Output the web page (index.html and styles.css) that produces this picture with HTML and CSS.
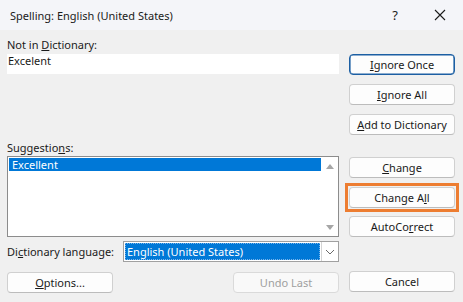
FILE: index.html
```html
<!DOCTYPE html>
<html lang="en">
<head>
  <meta charset="UTF-8">
  <title>Spelling: English (United States)</title>
  <link rel="stylesheet" href="styles.css">
</head>
<body>
  <div class="window">
    <!-- Title bar -->
    <div class="titlebar">
      <span class="title">Spelling: English (United States)</span>
      <span class="help">?</span>
      <span class="close">
        <svg width="12" height="12" viewBox="0 0 12 12"><path d="M1 1 L11 11 M11 1 L1 11" stroke="#1a1a1a" stroke-width="1.1" fill="none"/></svg>
      </span>
    </div>

    <div class="content">
      <!-- Left column -->
      <div class="left">
        <div class="label">Not in <u>D</u>ictionary:</div>
        <div class="field">Excelent</div>

        <div class="label suggest_label">Suggestio<u>n</u>s:</div>
        <div class="listbox">
          <div class="list_items">
            <div class="item selected">Excellent</div>
          </div>
          <div class="scroll">
            <span class="arrow up"></span>
            <span class="arrow down"></span>
          </div>
        </div>

        <div class="lang_row">
          <span class="label">Di<u>c</u>tionary language:</span>
          <div class="select">
            <div class="select_value"><span>English (United States)</span></div>
            <div class="select_btn">
              <svg width="10" height="6" viewBox="0 0 10 6"><path d="M1 1 L5 5 L9 1" stroke="#6a6a6a" stroke-width="1" fill="none"/></svg>
            </div>
          </div>
        </div>

        <div class="bottom_row">
          <button class="btn"><u>O</u>ptions...</button>
          <button class="btn disabled">Undo Last</button>
        </div>
      </div>

      <!-- Right column -->
      <div class="right">
        <button class="btn default"><u>I</u>gnore Once</button>
        <button class="btn"><u>I</u>gnore All</button>
        <button class="btn"><u>A</u>dd to Dictionary</button>
        <button class="btn change"><u>C</u>hange</button>
        <div class="highlight">
          <button class="btn">Change A<u>l</u>l</button>
        </div>
        <button class="btn autocorrect">AutoCo<u>r</u>rect</button>
        <button class="btn cancel">Cancel</button>
      </div>
    </div>
  </div>
</body>
</html>
```

FILE: styles.css
```css
/* Page */
body {
  margin: 0;
  padding: 0;
  background-color: #f0f0f0;
  font-family: 'Noto Sans', 'Open Sans', sans-serif;
  font-size: 11px;
  color: #1a1a1a;
}

.window {
  width: 463px;
  height: 302px;
  overflow: hidden;
  background-color: #f0f0f0;
}

/* Title bar */
.titlebar {
  height: 30px;
  display: flex;
  align-items: center;
  background-color: #f4f5f9;
  padding-left: 10px;
}
.titlebar .title {
  flex: 1;
}
.titlebar .help {
  width: 16px;
  text-align: center;
  font-size: 13px;
  margin-right: 31px;
}
.titlebar .close {
  display: flex;
  margin-right: 17px;
}

/* Main area */
.content {
  display: grid;
  grid-template-columns: 332px 106px;
  column-gap: 10px;
  padding: 7px 0 0 7px;
}

.left {
  display: flex;
  flex-direction: column;
}
.label {
  height: 17px;
  line-height: 16px;
  white-space: nowrap;
}
.field {
  height: 20px;
  line-height: 14px;
  background-color: #fff;
  padding-left: 1px;
}
.suggest_label {
  margin-top: 66px;
  height: 16px;
  line-height: 15px;
}

/* Suggestions list */
.listbox {
  height: 79px;
  border: 1px solid #8c8c8c;
  background-color: #fff;
  display: flex;
}
.list_items {
  flex: 1;
  padding: 1px 0 0 1px;
}
.item {
  height: 13px;
  line-height: 13px;
  padding-left: 3px;
}
.item.selected {
  background-color: #0078d7;
  color: #fff;
}
.scroll {
  width: 17px;
  display: flex;
  flex-direction: column;
  justify-content: space-between;
  align-items: center;
  padding: 7px 0 6px;
}
.arrow {
  width: 0;
  height: 0;
  border-left: 4px solid transparent;
  border-right: 4px solid transparent;
}
.arrow.up {
  border-bottom: 5px solid #a6a6a6;
}
.arrow.down {
  border-top: 5px solid #a6a6a6;
}

/* Dictionary language */
.lang_row {
  display: flex;
  align-items: center;
  margin-top: 4px;
}
.lang_row .label {
  width: 116px;
  height: auto;
}
.select {
  flex: 1;
  height: 19px;
  border: 1px solid #a0a0a0;
  background-color: #fff;
  display: flex;
}
.select_value {
  flex: 1;
  padding: 1px;
}
.select_value span {
  display: block;
  height: 17px;
  line-height: 17px;
  padding-left: 2px;
  background-color: #0078d7;
  color: #fff;
  outline: 1px dotted #7ab4ea;
  outline-offset: -1px;
}
.select_btn {
  width: 16px;
  border-left: 1px solid #d4d4d4;
  display: flex;
  align-items: center;
  justify-content: center;
}

.bottom_row {
  display: flex;
  justify-content: space-between;
  margin-top: 10px;
}

/* Buttons */
.btn {
  width: 106px;
  height: 21px;
  padding: 0;
  border: 1px solid #d0d0d0;
  border-bottom-color: #bcbcbc;
  border-radius: 4px;
  background-color: #fdfdfd;
  font-family: 'Noto Sans', 'Open Sans', sans-serif;
  font-size: 11px;
  color: #1a1a1a;
}
.btn.disabled {
  color: #a0a0a0;
  border-color: #dadada;
  background-color: #f9f9f9;
}
.btn.default {
  border: 1px solid #1c5fa3;
  box-shadow: inset 0 0 0 0.6px #1c5fa3;
}

.right {
  display: flex;
  flex-direction: column;
  gap: 9px;
  padding-top: 17px;
}
.right .change {
  margin-top: 13px;
}
.highlight {
  margin: -4px -4px -5px;
  border: 3px solid #ed7d31;
  padding: 1px;
  width: 106px;
}
.right .highlight .btn {
  display: block;
}
.right .autocorrect {
  margin-top: 0;
}
.right .cancel {
  margin-top: 25px;
}
```
